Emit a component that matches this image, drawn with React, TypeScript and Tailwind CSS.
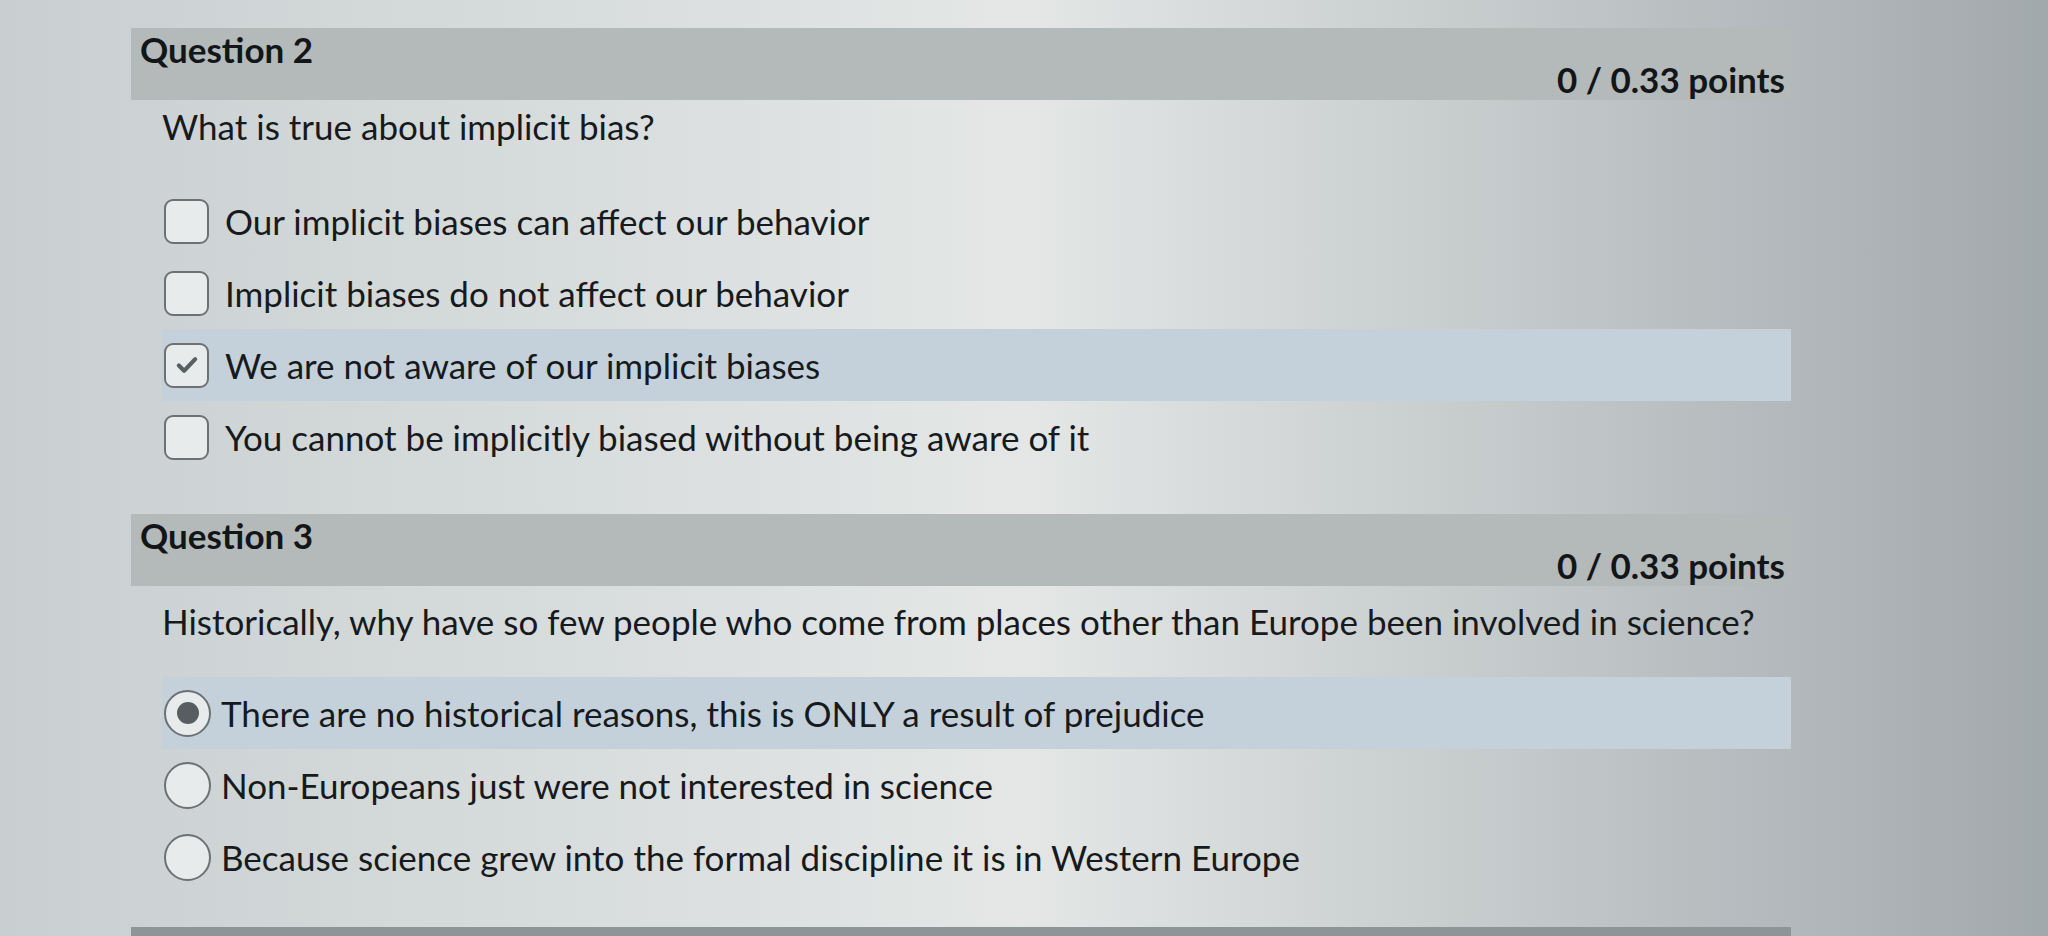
import React from 'react'

type Choice = {
  label: string
  selected?: boolean
}

type Question = {
  title: string
  points: string
  prompt: string
  kind: 'checkbox' | 'radio'
  choices: Choice[]
}

const QUESTIONS: Question[] = [
  {
    title: 'Question 2',
    points: '0 / 0.33 points',
    prompt: 'What is true about implicit bias?',
    kind: 'checkbox',
    choices: [
      { label: 'Our implicit biases can affect our behavior' },
      { label: 'Implicit biases do not affect our behavior' },
      { label: 'We are not aware of our implicit biases', selected: true },
      { label: 'You cannot be implicitly biased without being aware of it' }
    ]
  },
  {
    title: 'Question 3',
    points: '0 / 0.33 points',
    prompt: 'Historically, why have so few people who come from places other than Europe been involved in science?',
    kind: 'radio',
    choices: [
      { label: 'There are no historical reasons, this is ONLY a result of prejudice', selected: true },
      { label: 'Non-Europeans just were not interested in science' },
      { label: 'Because science grew into the formal discipline it is in Western Europe' }
    ]
  }
]

function CheckBox({ checked }: { checked?: boolean }) {
  return (
    <span className="flex h-[45px] w-[45px] shrink-0 items-center justify-center rounded-[9px] border-2 border-[#6c7174] bg-[#e8ebeb]">
      {checked && (
        <svg className="h-[28px] w-[28px]" viewBox="0 0 24 24" fill="none" stroke="#5a5f62" strokeWidth={3.6} strokeLinecap="round" strokeLinejoin="round">
          <path d="M5 12.5l4.5 4.5L19 7" />
        </svg>
      )}
    </span>
  )
}

function Radio({ checked }: { checked?: boolean }) {
  return (
    <span className="flex h-[47px] w-[47px] shrink-0 items-center justify-center rounded-full border-2 border-[#6c7174] bg-[#e8ebeb]">
      {checked && <span className="h-[22px] w-[22px] rounded-full bg-[#585d61]" />}
    </span>
  )
}

function QuestionBlock({ q }: { q: Question }) {
  const isCheckbox = q.kind === 'checkbox'
  return (
    <section>
      {/* header bar */}
      <div className="flex h-[72px] justify-between bg-[#b4b9ba] pr-[6px] pl-[9px]">
        <h2 className="self-start text-[35px] font-bold leading-[42px] text-[#131618]">{q.title}</h2>
        <span className="self-end text-[35px] font-bold leading-[42px] text-[#131618]">{q.points}</span>
      </div>

      <p className={`pl-[31px] text-[35px] leading-[42px] text-[#171a1d] ${isCheckbox ? 'mt-[5px]' : 'mt-[14px]'}`}>
        {q.prompt}
      </p>

      {/* answers */}
      <ul className={`ml-[31px] ${isCheckbox ? 'mt-[38px]' : 'mt-[35px]'}`}>
        {q.choices.map((c) => (
          <li
            key={c.label}
            className={`flex h-[72px] items-center pl-[2px] ${isCheckbox ? 'gap-[16px]' : 'gap-[10px]'} ${c.selected ? 'bg-[#c4d1da]' : ''}`}
          >
            {isCheckbox ? <CheckBox checked={c.selected} /> : <Radio checked={c.selected} />}
            <span className="text-[35px] leading-[42px] text-[#171a1d]">{c.label}</span>
          </li>
        ))}
      </ul>
    </section>
  )
}

export default function App() {
  return (
    <div
      className="h-[936px] overflow-hidden bg-linear-to-r from-[#c9cfd1] via-[#e4e7e6] via-50% to-[#a2a9ad] pt-[28px] pl-[131px]"
      style={{ fontFamily: 'Lato, "Noto Sans", sans-serif' }}
    >
      <div className="flex w-[1660px] flex-col">
        <QuestionBlock q={QUESTIONS[0]} />
        <div className="mt-[41px]">
          <QuestionBlock q={QUESTIONS[1]} />
        </div>
        {/* next question header, cut off at the bottom */}
        <div className="mt-[34px] h-[72px] bg-[#8e9597]" />
      </div>
    </div>
  )
}
